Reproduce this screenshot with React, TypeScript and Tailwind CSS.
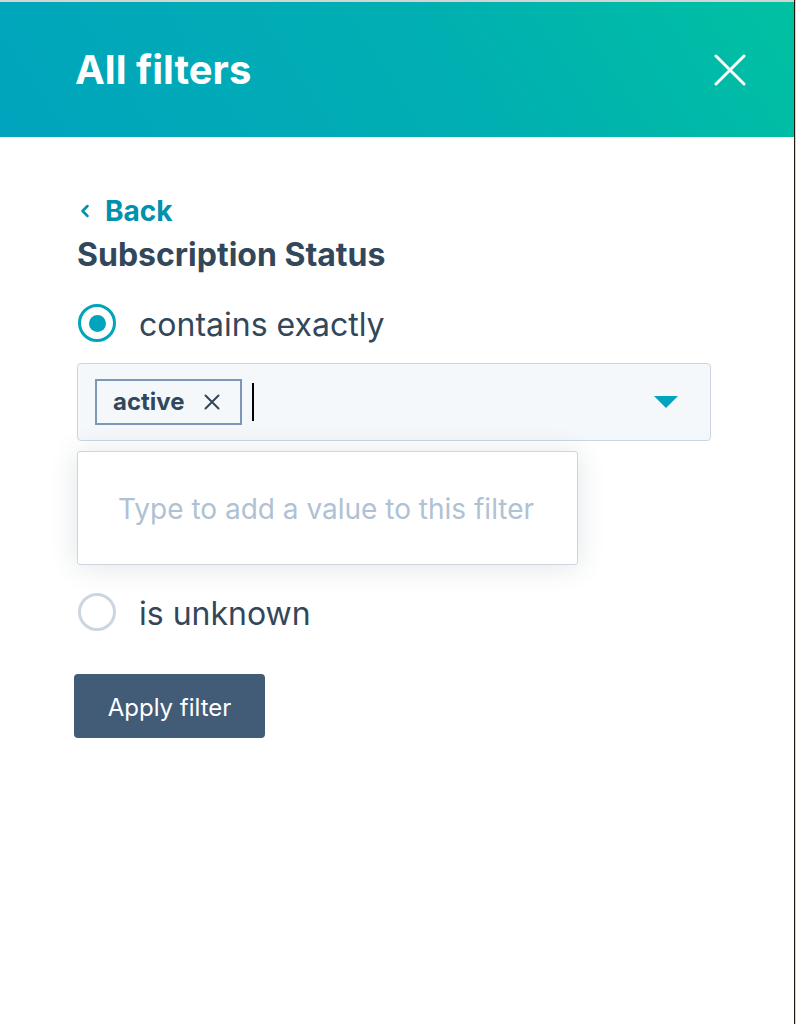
import React from "react";

function Radio({ checked, label }: { checked: boolean; label: string }) {
  return (
    <div className="flex h-[40px] items-center">
      <div
        className={
          checked
            ? "ml-[1px] flex h-[38px] w-[38px] items-center justify-center rounded-full border-[3px] border-[#00a4bd] bg-white"
            : "ml-[1px] flex h-[38px] w-[38px] items-center justify-center rounded-full border-[3px] border-[#cbd6e2] bg-white"
        }
      >
        {checked && <div className="h-[17px] w-[17px] rounded-full bg-[#00a4bd]" />}
      </div>
      <span className="ml-[23px] pt-[3px] text-[32px] leading-[40px] text-[#33475b]">{label}</span>
    </div>
  );
}

export default function App() {
  return (
    <div className="flex h-[1024px] w-[796px] bg-white font-['Inter',sans-serif] text-[#33475b]">
      <div className="flex w-[794px] flex-col">
        <div className="h-[2px] bg-[#d4d4d4]" />
        <header className="flex h-[135px] items-center justify-between bg-[linear-gradient(-303deg,#00a4bd,#00afb2_56%,#00c1a2)] pl-[75px] pr-[48px]">
          <h1 className="text-[40px] font-bold leading-[48px] text-white">All filters</h1>
          <svg width="32" height="32" viewBox="0 0 32 32" fill="none" stroke="white" strokeWidth="3" strokeLinecap="round">
            <path d="M2 2 L30 30 M30 2 L2 30" />
          </svg>
        </header>
        <main className="flex flex-col pl-[77px] pr-[83px] pt-[56px]">
          <div className="flex h-[36px] items-center text-[#0091ae]">
            <svg width="10" height="14" viewBox="0 0 10 14" fill="none" stroke="#0091ae" strokeWidth="2.5" strokeLinecap="round" strokeLinejoin="round" className="ml-[3px]">
              <path d="M7.5 2 L2.5 7 L7.5 12" />
            </svg>
            <span className="ml-[15px] text-[28px] font-bold leading-[36px]">Back</span>
          </div>
          <h2 className="mt-[4px] text-[32px] font-bold leading-[44px] text-[#33475b]">Subscription Status</h2>
          <div className="mt-[26px]">
            <Radio checked label="contains exactly" />
          </div>
          <div className="relative mt-[20px]">
            <div className="flex h-[78px] items-center rounded-[4px] border border-[#cbd6e2] bg-[#f5f8fa] pl-[17px] pr-[32px]">
              <div className="flex h-[46px] items-center border-2 border-[#7c98b6] bg-[#f5f8fa] pl-[16px] pr-[20px]">
                <span className="text-[24px] font-bold leading-[30px] text-[#33475b]">active</span>
                <svg width="16" height="16" viewBox="0 0 16 16" fill="none" stroke="#33475b" strokeWidth="2" strokeLinecap="round" className="ml-[19px]">
                  <path d="M1.5 1.5 L14.5 14.5 M14.5 1.5 L1.5 14.5" />
                </svg>
              </div>
              <div className="ml-[10px] h-[38px] w-[2px] bg-black" />
              <div className="flex-1" />
              <svg width="24" height="12" viewBox="0 0 24 12" fill="#00a4bd">
                <path d="M0 0 H24 L12 12 Z" />
              </svg>
            </div>
            <div className="absolute left-0 top-[88px] z-10 flex h-[114px] w-[501px] items-center rounded-[3px] border border-[#cbd6e2] bg-white pl-[40px] shadow-[0_2px_28px_rgba(45,62,80,0.14)]">
              <span className="pt-[2px] text-[28px] leading-[36px] text-[#b0c1d4]">Type to add a value to this filter</span>
            </div>
          </div>
          <div className="mt-[151px]">
            <Radio checked={false} label="is unknown" />
          </div>
          <div className="mt-[42px]">
            <button className="-ml-[3px] flex h-[64px] w-[191px] items-center justify-center rounded-[4px] bg-[#425b76] pt-[3px] text-[24px] font-normal text-white">
              Apply filter
            </button>
          </div>
        </main>
      </div>
      <div className="w-[1px] bg-[#24150d]" />
      <div className="w-[1px] bg-[#cdd6d6]" />
    </div>
  );
}
